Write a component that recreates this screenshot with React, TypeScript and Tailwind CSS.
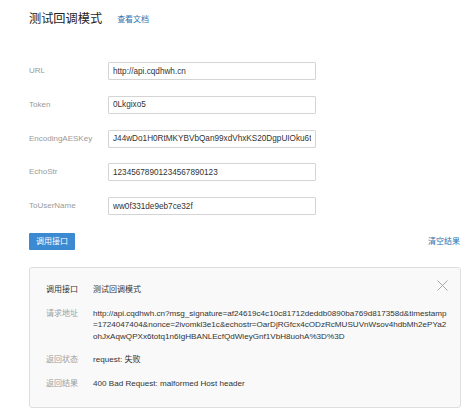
const fields = [
  { label: "URL", value: "http://api.cqdhwh.cn" },
  { label: "Token", value: "0Lkgixo5" },
  { label: "EncodingAESKey", value: "J44wDo1H0RtMKYBVbQan99xdVhxKS20DgpUIOku6teHnB" },
  { label: "EchoStr", value: "12345678901234567890123" },
  { label: "ToUserName", value: "ww0f331de9eb7ce32f" },
];

const urlLines = [
  "http://api.cqdhwh.cn?msg_signature=af24619c4c10c81712deddb0890ba769d817358d&timestamp",
  "=1724047404&nonce=2ivomkl3e1c&echostr=OarDjRGfcx4cODzRcMUSUVnWsov4hdbMh2ePYa2",
  "ohJxAqwQPXx6totq1n6IgHBANLEcfQdWieyGnf1VbH8uohA%3D%3D",
];

export default function App() {
  return (
    <div
      className="w-[474px] h-[416px] bg-white pl-[29px] pr-[13px] pt-[11px] text-[8.1px] text-[#333]"
      style={{ fontFamily: '"Liberation Sans", "Noto Sans CJK SC", sans-serif' }}
    >
      <div className="flex items-center gap-[15px] h-[17px]">
        <h1 className="text-[12.2px] leading-[17px] text-[#222]">测试回调模式</h1>
        <a className="text-[8px] text-[#2d72b0] mt-[1px]">查看文档</a>
      </div>

      <div className="mt-[34px] flex flex-col gap-[15.75px]">
        {fields.map((f) => (
          <div key={f.label} className="flex items-center h-[18px]">
            <span className="w-[79px] text-[8px] text-[#9a9a9a]">{f.label}</span>
            <input
              readOnly
              value={f.value}
              className="w-[208px] h-[18px] px-[4px] border border-[#d4d4d4] rounded-[1px] text-[8.2px] text-[#333] outline-none bg-white"
            />
          </div>
        ))}
      </div>

      <div className="mt-[18px] flex items-center justify-between">
        <button className="w-[46px] h-[17px] bg-[#3b8ad2] text-white text-[8px] rounded-[1px]">
          调用接口
        </button>
        <a className="text-[8px] text-[#2d72b0] pr-[1px]">清空结果</a>
      </div>

      <div className="relative mt-[17px] h-[141px] border border-[#dedede] rounded-[3px] bg-[#f9f9f9] pl-[16px] pt-[16px] leading-[11.5px] flex flex-col gap-[12px]">
        <svg
          className="absolute right-[12px] top-[12px]"
          width="11"
          height="11"
          viewBox="0 0 11 11"
          fill="none"
          stroke="#a8a8a8"
          strokeWidth="1"
        >
          <path d="M0.5 0.5 L10.5 10.5 M10.5 0.5 L0.5 10.5" />
        </svg>
        <div className="flex">
          <span className="w-[47px] text-[8px] text-[#333]">调用接口</span>
          <span className="text-[8px]">测试回调模式</span>
        </div>
        <div className="flex">
          <span className="w-[47px] text-[8px] text-[#a0a0a0]">请求地址</span>
          <div className="flex flex-col">
            {urlLines.map((l) => (
              <span key={l} className="whitespace-nowrap">{l}</span>
            ))}
          </div>
        </div>
        <div className="flex">
          <span className="w-[47px] text-[8px] text-[#a0a0a0]">返回状态</span>
          <span>request: 失败</span>
        </div>
        <div className="flex">
          <span className="w-[47px] text-[8px] text-[#a0a0a0]">返回结果</span>
          <span>400 Bad Request: malformed Host header</span>
        </div>
      </div>
    </div>
  );
}
